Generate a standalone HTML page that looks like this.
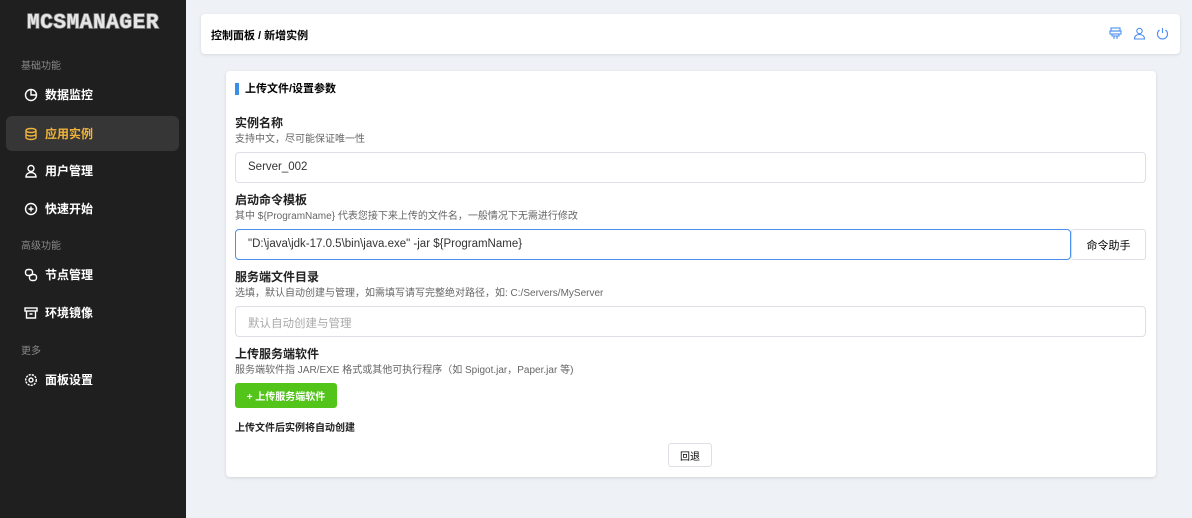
<!DOCTYPE html><html><head><meta charset="utf-8"><style>
*{box-sizing:border-box;margin:0;padding:0}
body{width:1192px;height:518px;overflow:hidden;background:#eef1f5;font-family:"Liberation Sans","Noto Sans CJK SC",sans-serif;position:relative}
.sb{position:absolute;left:0;top:0;width:186px;height:518px;background:#1f1f1f;color:#fff}
.logo{position:absolute;left:27px;top:12px;font:bold 21px "Liberation Mono",monospace;letter-spacing:0.6px;color:#e6e6e6;-webkit-text-stroke:1.5px #888;paint-order:stroke fill}
.gt{position:absolute;left:21px;font-size:10px;color:#888}
.it{position:absolute;left:6px;width:173px;height:35px;border-radius:6px;font-size:12px;font-weight:bold;display:flex;align-items:center;padding-left:18px}
.it svg{margin-right:7px}
.it.a{background:#363636;color:#f0b33a}
.top{position:absolute;left:201px;top:14px;width:979px;height:40px;background:#fff;border-radius:4px;box-shadow:0 1px 3px rgba(0,0,0,.1);font-size:11px;font-weight:bold;padding:13px 10px}
.card{position:absolute;left:226px;top:71px;width:930px;height:406px;background:#fff;border-radius:4px;box-shadow:0 1px 3px rgba(0,0,0,.12)}
.h{position:absolute;left:9px;top:12px;font-size:11px;font-weight:bold;border-left:4px solid #3a8ee6;padding-left:6px;line-height:12px}
.l{position:absolute;left:9px;font-size:12px;font-weight:bold;color:#222}
.s{position:absolute;left:9px;font-size:10px;color:#666}
.in{position:absolute;left:9px;height:31px;border:1px solid #dcdfe6;border-radius:4px;font-size:11.5px;padding:8px 12px;color:#333}
.btn{position:absolute;font-size:11px;border:1px solid #dcdfe6;border-radius:3px;display:flex;align-items:center;justify-content:center;background:#fff}
</style></head><body>
<div class="sb">
<div class="logo">MCSMANAGER</div>
<div class="gt" style="top:57px">基础功能</div>
<div class="it" style="top:77px"><svg width="14" height="14" viewBox="0 0 14 14" fill="none" stroke="#fff" stroke-width="1.4"><circle cx="7" cy="7" r="5.5"/><path d="M7 1.5V7H12.5"/></svg>数据监控</div>
<div class="it a" style="top:116px"><svg width="14" height="14" viewBox="0 0 14 14" fill="none" stroke="#f0b33a" stroke-width="1.4"><ellipse cx="7" cy="3.5" rx="5" ry="2"/><path d="M2 3.5v7c0 1.1 2.2 2 5 2s5-.9 5-2v-7M2 7c0 1.1 2.2 2 5 2s5-.9 5-2"/></svg>应用实例</div>
<div class="it" style="top:153px"><svg width="14" height="14" viewBox="0 0 14 14" fill="none" stroke="#fff" stroke-width="1.4"><circle cx="7" cy="4.5" r="3"/><path d="M2 13c0-3 2.2-4.5 5-4.5s5 1.5 5 4.5z"/></svg>用户管理</div>
<div class="it" style="top:191px"><svg width="14" height="14" viewBox="0 0 14 14" fill="none" stroke="#fff" stroke-width="1.4"><circle cx="7" cy="7" r="5.5"/><path d="M7 4.5v5M4.5 7h5"/></svg>快速开始</div>
<div class="gt" style="top:237px">高级功能</div>
<div class="it" style="top:257px"><svg width="14" height="14" viewBox="0 0 14 14" fill="none" stroke="#fff" stroke-width="1.4"><rect x="1.5" y="1.5" width="7" height="6" rx="2.5"/><rect x="5.5" y="6.5" width="7" height="6" rx="2.5"/></svg>节点管理</div>
<div class="it" style="top:295px"><svg width="14" height="14" viewBox="0 0 14 14" fill="none" stroke="#fff" stroke-width="1.4"><rect x="1" y="2" width="12" height="3"/><path d="M2.5 5v7h9V5M5.5 8h3"/></svg>环境镜像</div>
<div class="gt" style="top:342px">更多</div>
<div class="it" style="top:362px"><svg width="14" height="14" viewBox="0 0 14 14" fill="none" stroke="#fff" stroke-width="1.4"><circle cx="7" cy="7" r="2"/><circle cx="7" cy="7" r="5.3" stroke-dasharray="2.2 1"/></svg>面板设置</div>
</div>
<div class="top">控制面板 / 新增实例
<svg style="position:absolute;left:908px;top:13px" width="13" height="13" viewBox="0 0 13 13" fill="none" stroke="#4a8ff0" stroke-width="1.1"><rect x="2" y="1" width="9" height="3"/><rect x="1" y="4" width="11" height="3"/><path d="M3 7v2h7V7M5 9v3M8 9v3"/></svg>
<svg style="position:absolute;left:932px;top:13px" width="13" height="13" viewBox="0 0 13 13" fill="none" stroke="#4a8ff0" stroke-width="1.1"><circle cx="6.5" cy="4" r="2.7"/><path d="M1.5 12c0-3 2-4.5 5-4.5s5 1.5 5 4.5z"/></svg>
<svg style="position:absolute;left:955px;top:13px" width="13" height="13" viewBox="0 0 13 13" fill="none" stroke="#4a8ff0" stroke-width="1.1"><path d="M6.5 1v5M3.5 3a5 5 0 1 0 6 0"/></svg>
</div>
<div class="card">
<div class="h" style="top:12px">上传文件/设置参数</div>
<div class="l" style="top:43px">实例名称</div>
<div class="s" style="top:59px">支持中文，尽可能保证唯一性</div>
<div class="in" style="top:81px;width:911px">Server_002</div>
<div class="l" style="top:120px">启动命令模板</div>
<div class="s" style="top:136px">其中 ${ProgramName} 代表您接下来上传的文件名，一般情况下无需进行修改</div>
<div class="in" style="top:158px;width:836px;border-color:#4a8ff0">"D:\java\jdk-17.0.5\bin\java.exe" -jar ${ProgramName}</div>
<div class="btn" style="left:845px;top:158px;width:75px;height:31px">命令助手</div>
<div class="l" style="top:197px">服务端文件目录</div>
<div class="s" style="top:213px">选填，默认自动创建与管理，如需填写请写完整绝对路径，如: C:/Servers/MyServer</div>
<div class="in" style="top:235px;width:911px;color:#aaa">默认自动创建与管理</div>
<div class="l" style="top:274px">上传服务端软件</div>
<div class="s" style="top:290px">服务端软件指 JAR/EXE 格式或其他可执行程序（如 Spigot.jar，Paper.jar 等)</div>
<div class="btn" style="left:9px;top:312px;width:102px;height:25px;background:#52c41a;border-color:#52c41a;color:#fff;font-weight:bold;font-size:10px">+ 上传服务端软件</div>
<div class="l" style="top:348px;font-size:10px">上传文件后实例将自动创建</div>
<div class="btn" style="left:442px;top:372px;width:44px;height:24px;font-size:10px">回退</div>
</div>
</body></html>
